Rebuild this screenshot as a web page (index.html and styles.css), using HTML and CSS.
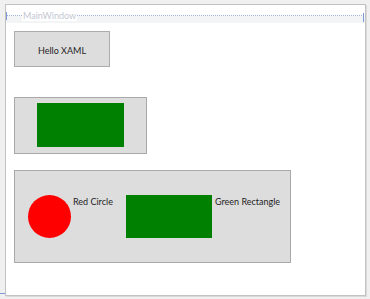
FILE: index.html
```html
<!DOCTYPE html>
<html>
<head>
<meta charset="utf-8">
<link rel="stylesheet" href="styles.css">
</head>
<body>
<div class="window">
  <div class="titlebar">
    <span class="caption">MainWindow</span>
    <span class="tick tick-left"></span>
    <span class="tick tick-right"></span>
  </div>
  <div class="content">
    <div class="button">Hello XAML</div>
    <div class="panel panel-one">
      <div class="green-rect big"></div>
    </div>
    <div class="panel panel-two">
      <div class="circle"></div>
      <div class="label label-red">Red Circle</div>
      <div class="green-rect small"></div>
      <div class="label label-green">Green Rectangle</div>
    </div>
  </div>
</div>
<span class="tick tick-bottom"></span>
</body>
</html>
```

FILE: styles.css
```css
html, body {
  margin: 0;
  padding: 0;
}
body {
  background: #f0f0f0;
  width: 370px;
  height: 299px;
  overflow: hidden;
  position: relative;
  font-family: Lato, "Open Sans", sans-serif;
}
.window {
  position: relative;
  box-sizing: border-box;
  margin: 4px 0 0 5px;
  width: 361px;
  height: 292px;
  background: #ffffff;
  border: 1px solid #c2c2c2;
  box-shadow: 1px 1px 0 #dadada;
}
.titlebar {
  height: 18px;
  display: flex;
  align-items: flex-start;
  background:
    repeating-linear-gradient(to right, #9fb1dd 0, #9fb1dd 1px, transparent 1px, transparent 2px) 1px 10px / calc(100% - 2px) 1px no-repeat,
    linear-gradient(to bottom, #ffffff 0, #ffffff 11px, #f3f4f6 11px, #f3f4f6 100%);
}
.caption {
  margin: 5px 0 0 16px;
  padding: 0 1px;
  background: #ffffff;
  font-size: 9px;
  line-height: 11px;
  color: #c3c7d2;
}
.tick {
  position: absolute;
  background: #7f98d6;
}
.tick-left {
  left: 0;
  top: 7px;
  width: 1px;
  height: 8px;
}
.tick-right {
  right: 1px;
  top: 8px;
  width: 1px;
  height: 9px;
}
.tick-bottom {
  left: 0;
  top: 293px;
  width: 5px;
  height: 1px;
}
.content {
  padding: 8px 0 0 8px;
  display: flex;
  flex-direction: column;
  align-items: flex-start;
}
.button {
  box-sizing: border-box;
  width: 96px;
  height: 36px;
  background: #dddddd;
  border: 1px solid #acacac;
  display: flex;
  align-items: center;
  justify-content: center;
  font-size: 9px;
  color: #1e1e1e;
  padding-top: 2px;
}
.panel {
  box-sizing: border-box;
  background: #dddddd;
  border: 1px solid #a9a9a9;
}
.panel-one {
  margin-top: 30px;
  width: 133px;
  height: 57px;
  padding: 5px 22px 0 22px;
}
.green-rect {
  background: #008000;
}
.green-rect.big {
  width: 87px;
  height: 44px;
}
.panel-two {
  margin-top: 16px;
  width: 277px;
  height: 93px;
  padding: 24px 0 0 13px;
  display: flex;
  align-items: flex-start;
}
.circle {
  width: 43px;
  height: 43px;
  border-radius: 50%;
  background: #ff0000;
}
.label {
  font-size: 9px;
  line-height: 12px;
  color: #1e1e1e;
  white-space: nowrap;
  padding-top: 1px;
}
.label-red {
  margin-left: 2px;
  width: 53px;
}
.green-rect.small {
  width: 86px;
  height: 43px;
}
.label-green {
  margin-left: 3px;
}
```
